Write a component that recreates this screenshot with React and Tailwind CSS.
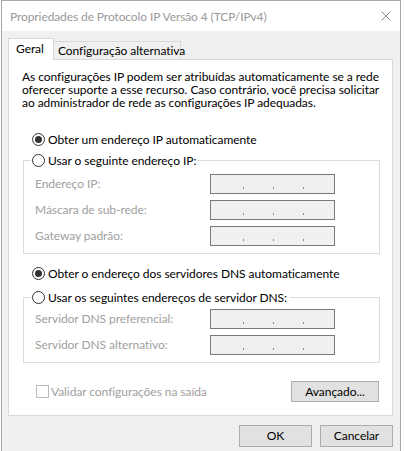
import React from "react";

function Radio({ checked }) {
  return (
    <span className="w-[13px] h-[13px] rounded-full border border-[#333333] bg-white flex items-center justify-center shrink-0">
      {checked && <span className="w-[7px] h-[7px] rounded-full bg-[#333333]" />}
    </span>
  );
}

function IpField() {
  return (
    <div className="w-[125px] h-[20px] border border-[#7a7a7a] bg-[#f0f0f0] flex items-start pl-[32px] pt-[12px] gap-[29px]">
      <span className="w-px h-[2px] bg-[#8c8c8c]" />
      <span className="w-px h-[2px] bg-[#8c8c8c]" />
      <span className="w-px h-[2px] bg-[#8c8c8c]" />
    </div>
  );
}

function FieldRow({ label }) {
  return (
    <div className="flex items-center justify-between h-[20px]">
      <span className="text-[#a0a0a0] whitespace-nowrap">{label}</span>
      <IpField />
    </div>
  );
}

function GroupHeader({ label, width }) {
  return (
    <div className="flex h-[13px]">
      <div className="self-end h-[7px] w-[8px] border-l border-t border-[#dcdcdc]" />
      <div className={`flex items-center pl-[1px] bg-white ${width}`}>
        <Radio />
        <span className="ml-[3px] whitespace-nowrap text-black">{label}</span>
      </div>
      <div className="self-end h-[7px] flex-1 border-t border-r border-[#dcdcdc]" />
    </div>
  );
}

export default function App() {
  return (
    <div className="w-[404px] h-[451px] overflow-hidden bg-white font-['Lato',sans-serif] text-[12px] leading-[16px] tracking-[-0.06px] text-black">
      <div className="ml-[1px] w-[400px] h-[460px] border border-[#aaaaaa] bg-[#f0f0f0] flex flex-col">
        {/* Title bar */}
        <div className="h-[30px] bg-white flex items-center justify-between pl-[8px] pr-[9px]">
          <span className="text-[#999999] whitespace-nowrap pt-[2px] tracking-[-0.1px]">
            Propriedades de Protocolo IP Versão 4 (TCP/IPv4)
          </span>
          <svg width="10" height="10" viewBox="0 0 10 10" className="shrink-0">
            <path d="M0.5 0.5 L9.5 9.5 M9.5 0.5 L0.5 9.5" stroke="#8a8a8a" strokeWidth="1" fill="none" />
          </svg>
        </div>

        {/* Body */}
        <div className="flex-1 pt-[7px] pl-[6px] pr-[7px]">
          {/* Tabs */}
          <div className="flex items-end h-[21px]">
            <div className="relative z-10 -mb-px h-[22px] w-[46px] bg-white border-x border-t border-[#d9d9d9] flex items-center pl-[7px] pb-[2px]">
              Geral
            </div>
            <div className="h-[18px] w-[127px] bg-[#f0f0f0] border-t border-r border-[#d9d9d9] flex items-center pl-[4px] whitespace-nowrap">
              Configuração alternativa
            </div>
          </div>

          {/* Panel */}
          <div className="h-[357px] border border-[#d9d9d9] bg-white flex flex-col">
            <div className="mt-[10px] pl-[13px] flex flex-col">
              <span className="h-[13px] leading-[13px] whitespace-nowrap">
                As configurações IP podem ser atribuídas automaticamente se a rede
              </span>
              <span className="h-[13px] leading-[13px] whitespace-nowrap">
                oferecer suporte a esse recurso. Caso contrário, você precisa solicitar
              </span>
              <span className="h-[13px] leading-[13px] whitespace-nowrap">
                ao administrador de rede as configurações IP adequadas.
              </span>
            </div>

            <div className="mt-[24px] h-[13px] pl-[23px] flex items-center">
              <Radio checked />
              <span className="ml-[3px] whitespace-nowrap">Obter um endereço IP automaticamente</span>
            </div>

            <div className="mt-[8px] ml-[14px] mr-[12px]">
              <GroupHeader label="Usar o seguinte endereço IP:" width="w-[166px]" />
              <div className="border-x border-b border-[#dcdcdc] pt-[7px] pb-[7px] pl-[11px] pr-[44px] flex flex-col gap-[6px]">
                <FieldRow label="Endereço IP:" />
                <FieldRow label="Máscara de sub-rede:" />
                <FieldRow label="Gateway padrão:" />
              </div>
            </div>

            <div className="mt-[13px] h-[13px] pl-[23px] flex items-center">
              <Radio checked />
              <span className="ml-[3px] whitespace-nowrap">Obter o endereço dos servidores DNS automaticamente</span>
            </div>

            <div className="mt-[11px] ml-[14px] mr-[12px]">
              <GroupHeader label="Usar os seguintes endereços de servidor DNS:" width="w-[259px]" />
              <div className="border-x border-b border-[#dcdcdc] pt-[5px] pb-[7px] pl-[11px] pr-[44px] flex flex-col gap-[6px]">
                <FieldRow label="Servidor DNS preferencial:" />
                <FieldRow label="Servidor DNS alternativo:" />
              </div>
            </div>

            <div className="mt-[18px] h-[21px] flex items-center pl-[27px] pr-[13px]">
              <span className="w-[13px] h-[13px] border border-[#bcbcbc] bg-white shrink-0" />
              <span className="ml-[2px] text-[#a0a0a0] whitespace-nowrap">Validar configurações na saída</span>
              <button className="ml-auto w-[88px] h-[21px] border border-[#adadad] bg-[#e1e1e1] flex items-center justify-center">
                Avançado...
              </button>
            </div>
          </div>

          {/* Bottom buttons */}
          <div className="mt-[9px] flex justify-end gap-[8px]">
            <button className="w-[73px] h-[22px] border border-[#adadad] bg-[#e1e1e1] flex items-center justify-center">
              OK
            </button>
            <button className="w-[73px] h-[22px] border border-[#adadad] bg-[#e1e1e1] flex items-center justify-center">
              Cancelar
            </button>
          </div>
        </div>
      </div>
    </div>
  );
}
